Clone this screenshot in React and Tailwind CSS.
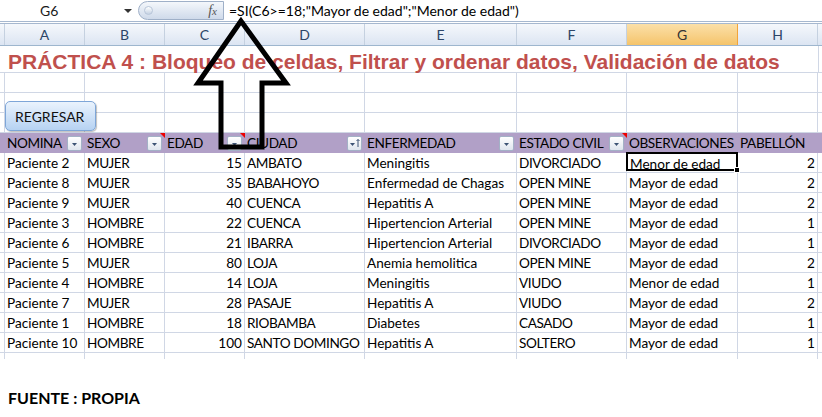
const COLS = [
  { key: 'rh', w: 5, label: '' },
  { key: 'A', w: 80, label: 'A' },
  { key: 'B', w: 80, label: 'B' },
  { key: 'C', w: 80, label: 'C' },
  { key: 'D', w: 120, label: 'D' },
  { key: 'E', w: 152, label: 'E' },
  { key: 'F', w: 110, label: 'F' },
  { key: 'G', w: 111, label: 'G' },
  { key: 'H', w: 80, label: 'H' },
  { key: 'I', w: 40, label: '' },
];

const HEADERS = [
  { text: 'NOMINA', filter: true },
  { text: 'SEXO', filter: true, note: true },
  { text: 'EDAD', filter: true, note: true },
  { text: 'CIUDAD', filter: true, sort: true },
  { text: 'ENFERMEDAD', filter: true },
  { text: 'ESTADO CIVIL', filter: true, note: true },
  { text: 'OBSERVACIONES' },
  { text: 'PABELLÓN' },
];

const ROWS = [
  ['Paciente 2', 'MUJER', 15, 'AMBATO', 'Meningitis', 'DIVORCIADO', 'Menor de edad', 2],
  ['Paciente 8', 'MUJER', 35, 'BABAHOYO', 'Enfermedad de Chagas', 'OPEN MINE', 'Mayor de edad', 2],
  ['Paciente 9', 'MUJER', 40, 'CUENCA', 'Hepatitis A', 'OPEN MINE', 'Mayor de edad', 2],
  ['Paciente 3', 'HOMBRE', 22, 'CUENCA', 'Hipertencion Arterial', 'OPEN MINE', 'Mayor de edad', 1],
  ['Paciente 6', 'HOMBRE', 21, 'IBARRA', 'Hipertencion Arterial', 'DIVORCIADO', 'Mayor de edad', 1],
  ['Paciente 5', 'MUJER', 80, 'LOJA', 'Anemia hemolitica', 'OPEN MINE', 'Mayor de edad', 2],
  ['Paciente 4', 'HOMBRE', 14, 'LOJA', 'Meningitis', 'VIUDO', 'Menor de edad', 1],
  ['Paciente 7', 'MUJER', 28, 'PASAJE', 'Hepatitis A', 'VIUDO', 'Mayor de edad', 2],
  ['Paciente 1', 'HOMBRE', 18, 'RIOBAMBA', 'Diabetes', 'CASADO', 'Mayor de edad', 1],
  ['Paciente 10', 'HOMBRE', 100, 'SANTO DOMINGO', 'Hepatitis A', 'SOLTERO', 'Mayor de edad', 1],
];

const calibri = { fontFamily: 'Lato, "Open Sans", sans-serif' };

// Calibri capitals are narrower than Lato's, tighten all-caps words a little
const isCaps = (v) => typeof v === 'string' && v === v.toUpperCase();

function FilterButton({ sort }) {
  return (
    <span className="absolute right-[3px] top-[3px] flex h-[15px] w-[15px] items-center justify-center rounded-[2px] border border-[#a3b1c6] bg-gradient-to-b from-white to-[#dfe5ee]">
      <svg width="13" height="13" viewBox="0 0 13 13">
        <polygon points={sort ? '2,6 7,6 4.5,9' : '4,6 9,6 6.5,9'} fill="#3c5274" />
        {sort && <path d="M10 10V2.5M8.5 4L10 2.5 11.5 4" stroke="#3c5274" strokeWidth="1" fill="none" />}
      </svg>
    </span>
  );
}

function GridRow({ height = 20, children }) {
  return (
    <div className="flex border-b border-[#d0d7e5]" style={{ height }}>
      {COLS.map((c, i) => (
        <div key={c.key} className="shrink-0 border-r border-[#d0d7e5]" style={{ width: c.w }}>
          {children ? children(i) : null}
        </div>
      ))}
    </div>
  );
}

export default function App() {
  return (
    <div className="relative h-[417px] w-[822px] overflow-hidden bg-white text-black" style={calibri}>
      {/* formula bar */}
      <div className="flex h-[21px] items-center bg-white text-[14px]">
        <div className="flex w-[138px] items-center">
          <span className="ml-[40px] text-[#1a1a1a]">G6</span>
          <span className="ml-auto mr-[6px] h-0 w-0 border-x-[4px] border-t-[4px] border-x-transparent border-t-[#333]" />
        </div>
        <div className="relative flex h-[19px] w-[86px] items-center rounded-l-full border border-[#9fb0c8] bg-gradient-to-b from-[#f4f7fb] to-[#cfdaea]">
          <span className="ml-[5px] h-[9px] w-[9px] rounded-full bg-gradient-to-b from-white to-[#c5d2e3] border border-[#b8c6d9]" />
          <span className="ml-auto mr-[6px] font-serif text-[14px] italic text-[#555]" style={{ fontFamily: '"Liberation Serif", serif' }}>
            f<span className="text-[11px]">x</span>
          </span>
        </div>
        <span className="ml-[5px] whitespace-nowrap text-[14px]">=SI(C6&gt;=18;"Mayor de edad";"Menor de edad")</span>
      </div>
      <div className="h-[3px] border-y border-[#a6b8cf]" />

      {/* column headers */}
      <div className="flex h-[22px] border-b border-[#9eb6ce]">
        {COLS.map((c) => (
          <div
            key={c.key}
            className={`flex shrink-0 items-center justify-center border-r text-[14px] ${
              c.key === 'G'
                ? 'border-[#f2a43a] bg-gradient-to-b from-[#fbe0a8] to-[#f5c46a] text-[#333]'
                : 'border-[#c5d1e0] bg-gradient-to-b from-[#f5f8fc] to-[#dce5f2] text-[#2d4567]'
            }`}
            style={{ width: c.w }}
          >
            {c.label}
          </div>
        ))}
      </div>

      {/* title row */}
      <div className="relative h-[27px] border-b border-[#d0d7e5]">
        <div className="absolute right-[3px] top-0 h-full border-r border-[#d0d7e5]" />
        <h1
          className="absolute left-[8px] top-0 whitespace-nowrap text-[21px] font-bold text-[#c0504d]"
          style={{ fontFamily: '"Liberation Sans", Arial, sans-serif' }}
        >
          PRÁCTICA 4 : Bloqueo de celdas, Filtrar y ordenar datos, Validación de datos
        </h1>
      </div>

      <GridRow />
      <GridRow />
      <GridRow />

      {/* table header */}
      <div className="flex h-[20px] bg-[#b1a0c7] text-[13.6px] tracking-[-0.4px]">
        {COLS.map((c, i) => {
          const h = HEADERS[i - 1];
          return (
            <div key={c.key} className="relative shrink-0 whitespace-nowrap pl-[2px] leading-[20px]" style={{ width: c.w }}>
              {h && h.text}
              {h && h.filter && <FilterButton sort={h.sort} />}
              {h && h.note && (
                <span className="absolute right-0 top-0 h-0 w-0 border-l-[5px] border-t-[5px] border-l-transparent border-t-[#e00]" />
              )}
            </div>
          );
        })}
      </div>

      {/* data */}
      {ROWS.map((r, ri) => (
        <GridRow key={ri}>
          {(i) => {
            const v = r[i - 1];
            if (v === undefined) return null;
            const num = typeof v === 'number';
            const selected = ri === 0 && i === 7;
            return (
              <div
                className={`relative h-full whitespace-nowrap px-[2px] text-[13.6px] leading-[20px] ${num ? 'text-right' : ''} ${
                  isCaps(v) ? 'tracking-[-0.4px]' : ''
                } ${selected ? 'z-10 -m-px border-2 border-black' : ''}`}
              >
                {v}
                {selected && <span className="absolute -bottom-[4px] -right-[4px] h-[6px] w-[6px] border border-white bg-black" />}
              </div>
            );
          }}
        </GridRow>
      ))}
      <div className="flex h-[6px]">
        {COLS.map((c) => (
          <div key={c.key} className="shrink-0 border-r border-[#d0d7e5]" style={{ width: c.w }} />
        ))}
      </div>

      <p className="ml-[8px] mt-[27px] text-[16px] font-bold">FUENTE : PROPIA</p>

      {/* regresar button */}
      <button
        className="absolute left-[5px] top-[101px] h-[30px] w-[91px] rounded-[5px] border border-[#7ea6d8] bg-gradient-to-b from-[#eaf3fd] to-[#b6d2f2] pl-[9px] text-left text-[14px] text-[#111] shadow-[1px_1px_1px_rgba(0,0,0,0.25)]"
        style={calibri}
      >
        REGRESAR
      </button>

      {/* arrow annotation */}
      <svg className="pointer-events-none absolute left-0 top-0" width="822" height="417">
        <polygon
          points="241,21 198,83 221,83 221,147 262,147 262,83 286,83"
          fill="none"
          stroke="#000"
          strokeWidth="5"
          strokeLinejoin="miter"
        />
      </svg>
    </div>
  );
}
